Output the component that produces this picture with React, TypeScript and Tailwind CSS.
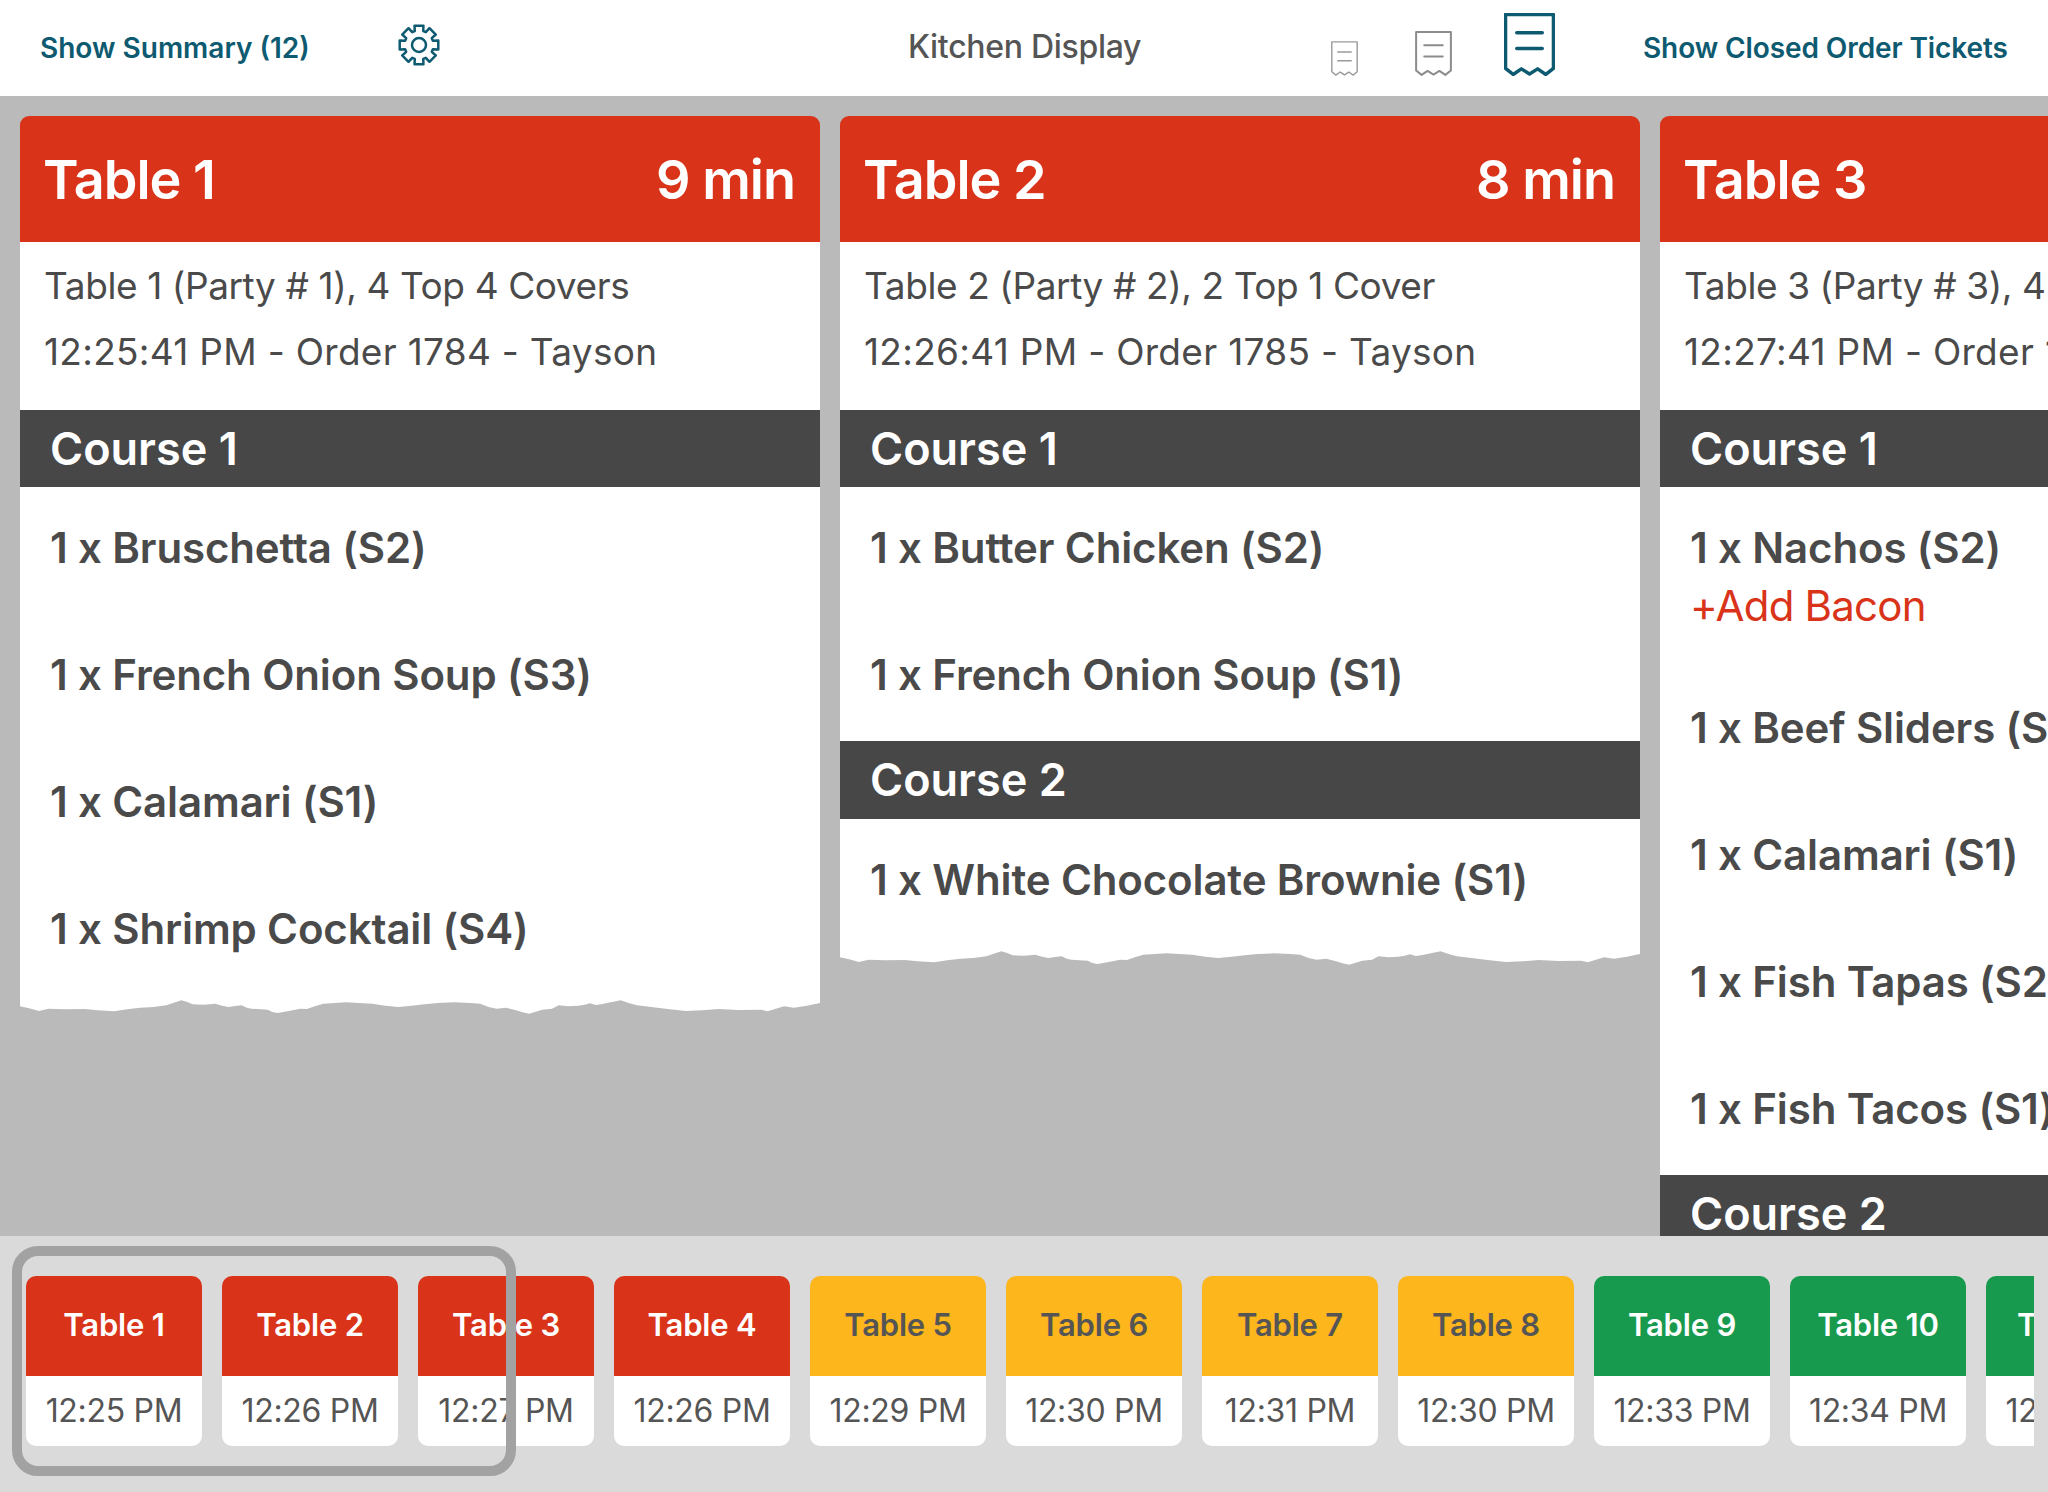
import * as React from "react";

const TEAL = "#0e5a70";

// torn paper edge, traced from the ticket bottom
const TORN =
  "31,284 31,318 45,324 60,332 68,328 75,325 100,327 130,326 150,330 175,333 195,327 215,322 235,320 255,315 265,308 278,300 288,306 295,312 312,313 330,310 340,316 350,320 360,317 370,315 378,322 385,325 410,328 417,335 425,338 440,333 460,325 470,326 482,318 495,310 530,306 550,308 570,310 590,316 610,320 630,316 650,312 670,308 695,306 720,308 735,310 748,320 760,325 775,322 790,330 800,336 810,340 820,334 830,328 845,325 855,315 870,318 885,316 895,313 903,309 912,314 920,312 935,306 950,300 962,308 975,315 1000,321 1025,327 1050,332 1075,330 1100,326 1130,329 1165,328 1175,333 1200,318 1215,322 1235,316 1255,308 1255,284";

type Section = { name: string; items: { text: string; mod?: string }[] };

interface Ticket {
  table: string;
  mins?: string;
  meta: string;
  order: string;
  sections: Section[];
  torn?: boolean;
}

const tickets: Ticket[] = [
  {
    table: "Table 1",
    mins: "9 min",
    meta: "Table 1 (Party # 1), 4 Top 4 Covers",
    order: "12:25:41 PM - Order 1784 - Tayson",
    torn: true,
    sections: [
      {
        name: "Course 1",
        items: [
          { text: "1 x Bruschetta (S2)" },
          { text: "1 x French Onion Soup (S3)" },
          { text: "1 x Calamari (S1)" },
          { text: "1 x Shrimp Cocktail (S4)" },
        ],
      },
    ],
  },
  {
    table: "Table 2",
    mins: "8 min",
    meta: "Table 2 (Party # 2), 2 Top 1 Cover",
    order: "12:26:41 PM - Order 1785 - Tayson",
    torn: true,
    sections: [
      {
        name: "Course 1",
        items: [{ text: "1 x Butter Chicken (S2)" }, { text: "1 x French Onion Soup (S1)" }],
      },
      { name: "Course 2", items: [{ text: "1 x White Chocolate Brownie (S1)" }] },
    ],
  },
  {
    table: "Table 3",
    mins: "8 min",
    meta: "Table 3 (Party # 3), 4 Top 4 Covers",
    order: "12:27:41 PM - Order 1786 - Tayson",
    sections: [
      {
        name: "Course 1",
        items: [
          { text: "1 x Nachos (S2)", mod: "+Add Bacon" },
          { text: "1 x Beef Sliders (S3)" },
          { text: "1 x Calamari (S1)" },
          { text: "1 x Fish Tapas (S2)" },
          { text: "1 x Fish Tacos (S1)" },
        ],
      },
      { name: "Course 2", items: [] },
    ],
  },
];

const tiles = [
  { label: "Table 1", time: "12:25 PM", tone: "red" },
  { label: "Table 2", time: "12:26 PM", tone: "red" },
  { label: "Table 3", time: "12:27 PM", tone: "red" },
  { label: "Table 4", time: "12:26 PM", tone: "red" },
  { label: "Table 5", time: "12:29 PM", tone: "amber" },
  { label: "Table 6", time: "12:30 PM", tone: "amber" },
  { label: "Table 7", time: "12:31 PM", tone: "amber" },
  { label: "Table 8", time: "12:30 PM", tone: "amber" },
  { label: "Table 9", time: "12:33 PM", tone: "green" },
  { label: "Table 10", time: "12:34 PM", tone: "green" },
  { label: "Table 11", time: "12:35 PM", tone: "green" },
];

function gearPath() {
  const pts: string[] = [];
  for (let i = 0; i < 8; i++) {
    const a = (i * 45 * Math.PI) / 180;
    const steps: [number, number][] = [
      [-17, 14.5],
      [-13, 19.8],
      [13, 19.8],
      [17, 14.5],
    ];
    for (const [off, r] of steps) {
      const t = a + (off * Math.PI) / 180;
      pts.push(`${(21 + r * Math.sin(t)).toFixed(2)} ${(21 - r * Math.cos(t)).toFixed(2)}`);
    }
  }
  return "M" + pts.join("L") + "Z";
}

function GearIcon() {
  return (
    <svg className="mb-[6px]" width="42" height="42" viewBox="0 0 42 42" fill="none" stroke={TEAL} strokeWidth="2.5" strokeLinejoin="round">
      <path d={gearPath()} />
      <circle cx="21" cy="21" r="7" />
    </svg>
  );
}

function ReceiptIcon({ w, h, sw, color }: { w: number; h: number; sw: number; color: string }) {
  return (
    <svg
      width={w}
      height={h}
      viewBox="0 0 50 62"
      preserveAspectRatio="none"
      fill="none"
      stroke={color}
      strokeLinejoin="round"
      strokeLinecap="round"
      strokeWidth={sw}
    >
      <path vectorEffect="non-scaling-stroke" d="M1.5 1.5H48.5V54.5L41 60.5L33 55L25 60L17 55L9 60.5L1.5 54.5Z" />
      <path vectorEffect="non-scaling-stroke" d="M12.5 19.5H37.5M12.5 35H37.5" />
    </svg>
  );
}

function TicketCard({ ticket }: { ticket: Ticket }) {
  return (
    <div className="w-[800px] shrink-0">
      <div className="flex h-[126px] items-center justify-between rounded-t-[9px] bg-[#d93419] pl-[23px] pr-[25px] text-[54px] font-semibold tracking-[-1px] text-white">
        <span>{ticket.table}</span>
        <span>{ticket.mins}</span>
      </div>
      <div className="h-[168px] whitespace-nowrap bg-white pl-[24px] pt-[11px] text-[37px] leading-[66px] text-[#4a4a4a]">
        <div className="tracking-[-0.4px]">{ticket.meta}</div>
        <div className="tracking-[0.3px]">{ticket.order}</div>
      </div>
      {ticket.sections.map((section) => (
        <div key={section.name}>
          <div className="flex h-[77.4px] items-center bg-[#474747] pl-[30px] text-[45px] font-semibold text-white">
            {section.name}
          </div>
          {section.items.map((item) => (
            <div
              key={item.text}
              className={
                "whitespace-nowrap bg-white pl-[30px] pt-[32px] text-[42px] font-semibold leading-[58px] tracking-[-0.13px] text-[#4a4a4a] " +
                (item.mod ? "pb-[32px]" : "pb-[37px]")
              }
            >
              <div>{item.text}</div>
              {item.mod ? <div className="font-normal tracking-[-0.8px] text-[#d93419]">{item.mod}</div> : null}
            </div>
          ))}
        </div>
      ))}
      {ticket.torn ? (
        <svg className="block h-[22px] w-full" viewBox="31 284 1224 66" preserveAspectRatio="none" fill="#ffffff">
          <polygon points={TORN} />
        </svg>
      ) : null}
    </div>
  );
}

function Tile({ label, time, tone }: { label: string; time: string; tone: string }) {
  const head =
    tone === "red"
      ? "bg-[#d93419] text-white"
      : tone === "amber"
        ? "bg-[#fdb61c] text-[#555555]"
        : "bg-[#189a4e] text-white";
  return (
    <div className="w-[176px] shrink-0">
      <div className={"flex h-[100px] items-center justify-center rounded-t-[10px] pb-[2px] text-[31px] font-semibold tracking-[-0.2px] " + head}>
        {label}
      </div>
      <div className="flex h-[70px] items-center justify-center rounded-b-[10px] bg-white text-[32px] tracking-[-0.3px] text-[#555555]">
        {time}
      </div>
    </div>
  );
}

export default function App() {
  return (
    <div className="relative flex h-[1492px] w-[2048px] flex-col overflow-hidden bg-[#bababa] font-[Inter,'Noto_Sans',sans-serif]">
      <header className="flex h-[96px] shrink-0 items-center bg-white">
        <div className="flex w-[908px] items-center">
          <a className="ml-[40px] w-[358px] text-[28px] font-semibold text-[#0e5a70]">Show Summary (12)</a>
          <GearIcon />
        </div>
        <div className="w-[423px] pb-[2px] text-[32px] font-medium tracking-[-0.3px] text-[#555555]">Kitchen Display</div>
        <div className="flex w-[312px] items-end self-start pt-[13px]">
          <div className="flex h-[63px] items-end gap-[57px]">
            <ReceiptIcon w={27} h={35} sw={1.4} color="#9a9a9a" />
            <ReceiptIcon w={37} h={45} sw={2} color="#8c8c8c" />
          </div>
          <div className="ml-[52px]">
            <ReceiptIcon w={51} h={63} sw={3.5} color={TEAL} />
          </div>
        </div>
        <a className="whitespace-nowrap text-[28px] font-semibold tracking-[-0.1px] text-[#0e5a70]">Show Closed Order Tickets</a>
      </header>

      <main className="flex min-h-0 flex-1 items-start gap-[20px] overflow-hidden pl-[20px] pt-[20px]">
        {tickets.map((t) => (
          <TicketCard key={t.table} ticket={t} />
        ))}
      </main>

      <footer className="relative h-[256px] shrink-0 bg-[#dadada] pl-[26px] pt-[40px]">
        <div className="flex w-[2008px] gap-[20px] overflow-hidden">
          {tiles.map((tile) => (
            <Tile key={tile.label} {...tile} />
          ))}
        </div>
        {/* visible range marker over the tiles */}
        <div className="absolute left-[12px] top-[10px] h-[230px] w-[504px] rounded-[26px] border-[10px] border-[#a2a2a2]" />
      </footer>
    </div>
  );
}
